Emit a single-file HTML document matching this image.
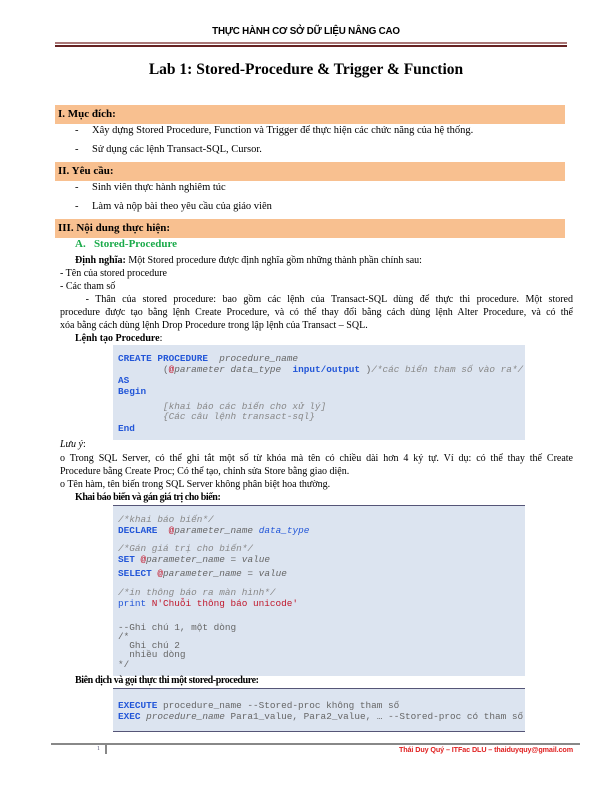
<!DOCTYPE html>
<html><head><meta charset="utf-8"><style>
body{margin:0;width:612px;height:792px;position:relative;background:#fff;font-family:"Liberation Serif","Noto Serif CJK SC",serif;color:#000;overflow:hidden}
.a{position:absolute;white-space:nowrap;font-size:10.5px;line-height:13px}
.bar{position:absolute;left:55px;width:510px;height:19px;background:#f8c090;font-weight:bold;font-size:11px;line-height:19px;padding-left:3px;box-sizing:border-box}
.box{position:absolute;left:113px;width:412px;background:#dce4f0}
.c{position:absolute;font-family:"Liberation Mono",monospace;font-size:9.4px;line-height:10px;white-space:pre;color:#666}
.k{color:#2256d8;font-weight:bold}.r{color:#c0182c}.i{font-style:italic}.cm{font-style:italic;color:#888}
.j{text-align:justify;text-align-last:justify;white-space:normal}
</style></head><body>
<div class="a" style="top:25px;left:0;width:612px;text-align:center;font-family:'Liberation Sans',sans-serif;font-weight:bold;font-size:9.8px;letter-spacing:-0.2px">THỰC HÀNH CƠ SỞ DỮ LIỆU NÂNG CAO</div>
<div style="position:absolute;left:55px;top:42px;width:512px;height:2px;background:#a77"></div>
<div style="position:absolute;left:55px;top:45px;width:512px;height:2px;background:#622"></div>
<div class="a" style="top:60px;left:0;width:612px;text-align:center;font-weight:bold;font-size:15.5px;line-height:20px">Lab 1: Stored-Procedure &amp; Trigger &amp; Function</div>
<div class="bar" style="top:105px">I. Mục đích:</div>
<div class="a" style="top:124px;left:75px">-</div><div class="a" style="top:124px;left:92px">Xây dựng Stored Procedure, Function và Trigger để thực hiện các chức năng của hệ thống.</div>
<div class="a" style="top:143px;left:75px">-</div><div class="a" style="top:143px;left:92px">Sử dụng các lệnh Transact-SQL, Cursor.</div>
<div class="bar" style="top:162px">II. Yêu cầu:</div>
<div class="a" style="top:181px;left:75px">-</div><div class="a" style="top:181px;left:92px">Sinh viên thực hành nghiêm túc</div>
<div class="a" style="top:200px;left:75px">-</div><div class="a" style="top:200px;left:92px">Làm và nộp bài theo yêu cầu của giáo viên</div>
<div class="bar" style="top:219px">III. Nội dung thực hiện:</div>
<div class="a" style="top:238px;left:75px;color:#1aaa4a;font-weight:bold;font-size:11px">A.&nbsp;&nbsp;&nbsp;Stored-Procedure</div>
<div class="a" style="top:254px;left:75px;font-size:10px"><b>Định nghĩa:</b> Một Stored procedure được định nghĩa gồm những thành phần chính sau:</div>
<div class="a" style="top:267px;left:60px;font-size:10px">- Tên của stored procedure</div>
<div class="a" style="top:280px;left:60px;font-size:10px">- Các tham số</div>
<div class="a j" style="top:293px;left:60px;width:513px;font-size:10px">&nbsp;&nbsp;&nbsp;&nbsp;- Thân của stored procedure: bao gồm các lệnh của Transact-SQL dùng để thực thi procedure. Một stored</div>
<div class="a j" style="top:306px;left:60px;width:513px;font-size:10px">procedure được tạo bằng lệnh Create Procedure, và có thể thay đổi bằng cách dùng lệnh Alter Procedure, và có thể</div>
<div class="a" style="top:319px;left:60px;font-size:10px">xóa bằng cách dùng lệnh Drop Procedure trong lập lệnh của Transact – SQL.</div>
<div class="a" style="top:332px;left:75px;font-size:10px"><b>Lệnh tạo Procedure</b>:</div>
<div class="box" style="top:345px;height:95px">
<div class="c" style="left:5px;top:9px"><span class="k">CREATE PROCEDURE</span>  <span class="i">procedure_name</span></div>
<div class="c" style="left:5px;top:20px">        (<span class="r">@</span><span class="i">parameter data_type</span>  <span class="k">input/output</span> )<span class="cm">/*các biến tham số vào ra*/</span></div>
<div class="c" style="left:5px;top:31px"><span class="k">AS</span></div>
<div class="c" style="left:5px;top:42px"><span class="k">Begin</span></div>
<div class="c" style="left:5px;top:57px">        <span class="cm">[khai báo các biến cho xử lý]</span></div>
<div class="c" style="left:5px;top:67px">        <span class="cm">{Các câu lệnh transact-sql}</span></div>
<div class="c" style="left:5px;top:79px"><span class="k">End</span></div>
</div>
<div class="a" style="top:438px;left:60px;font-size:10px"><i>Lưu ý</i>:</div>
<div class="a j" style="top:452px;left:60px;width:513px;font-size:10px">o Trong SQL Server, có thể ghi tắt một số từ khóa mà tên có chiều dài hơn 4 ký tự. Ví dụ: có thể thay thế Create</div>
<div class="a" style="top:465px;left:60px;font-size:10px">Procedure bằng Create Proc; Có thể tạo, chỉnh sửa Store bằng giao diện.</div>
<div class="a" style="top:478px;left:60px;font-size:10px">o Tên hàm, tên biến trong SQL Server không phân biệt hoa thường.</div>
<div class="a" style="top:491px;left:75px;font-size:10px;font-weight:bold;letter-spacing:-0.4px">Khai báo biến và gán giá trị cho biến:</div>
<div class="box" style="top:505px;height:170px;border-top:1px solid #557">
<div class="c" style="left:5px;top:9px"><span class="cm">/*khai báo biến*/</span></div>
<div class="c" style="left:5px;top:20px"><span class="k">DECLARE</span>  <span class="r">@</span><span class="i">parameter_name</span> <span class="i" style="color:#2256d8">data_type</span></div>
<div class="c" style="left:5px;top:38px"><span class="cm">/*Gán giá trị cho biến*/</span></div>
<div class="c" style="left:5px;top:49px"><span class="k">SET</span> <span class="r">@</span><span class="i">parameter_name = value</span></div>
<div class="c" style="left:5px;top:63px"><span class="k">SELECT</span> <span class="r">@</span><span class="i">parameter_name = value</span></div>
<div class="c" style="left:5px;top:82px"><span class="cm">/*in thông báo ra màn hình*/</span></div>
<div class="c" style="left:5px;top:93px"><span class="k" style="font-weight:normal">print</span> <span class="r">N'Chuỗi thông báo unicode'</span></div>
<div class="c" style="left:5px;top:117px">--Ghi chú 1, một dòng</div>
<div class="c" style="left:5px;top:126px">/*</div>
<div class="c" style="left:5px;top:135px">  Ghi chú 2</div>
<div class="c" style="left:5px;top:144px">  nhiều dòng</div>
<div class="c" style="left:5px;top:154px">*/</div>
</div>
<div class="a" style="top:674px;left:75px;font-size:10px;font-weight:bold;letter-spacing:-0.4px">Biên dịch và gọi thực thi một stored-procedure:</div>
<div class="box" style="top:688px;height:42px;border-top:1px solid #557;border-bottom:1px solid #557">
<div class="c" style="left:5px;top:12px"><span class="k">EXECUTE</span> procedure_name --Stored-proc không tham số</div>
<div class="c" style="left:5px;top:23px"><span class="k">EXEC</span> <span class="i">procedure_name</span> Para1_value, Para2_value, … --Stored-proc có tham số</div>
</div>
<div style="position:absolute;left:51px;top:743px;width:529px;height:2px;background:#888"></div>
<div style="position:absolute;left:105px;top:743px;width:2px;height:11px;background:#888"></div>
<div class="a" style="top:743px;left:97px;font-size:6px;color:#557">1</div>
<div class="a" style="top:743px;left:390px;width:183px;text-align:right;font-family:'Liberation Sans',sans-serif;font-size:7.2px;font-weight:bold;color:#e02020;letter-spacing:-0.1px">Thái Duy Quý – ITFac DLU – thaiduyquy@gmail.com</div>
</body></html>
